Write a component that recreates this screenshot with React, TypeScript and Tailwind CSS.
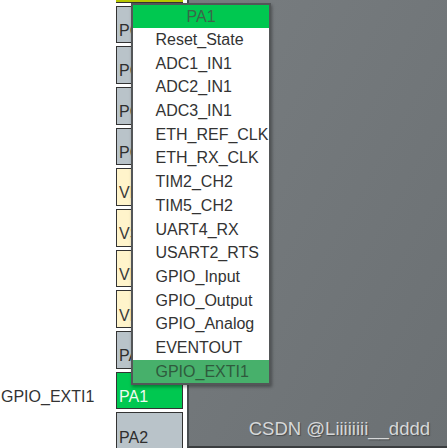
import React from "react";

type Pin = { name: string; kind: "p" | "v" | "sel" };

const pins: Pin[] = [
  { name: "PC0", kind: "p" },
  { name: "PC1", kind: "p" },
  { name: "PC2", kind: "p" },
  { name: "PC3", kind: "p" },
  { name: "VDD", kind: "v" },
  { name: "VSSA", kind: "v" },
  { name: "VREF+", kind: "v" },
  { name: "VDDA", kind: "v" },
  { name: "PA0-WKUP", kind: "p" },
  { name: "PA1", kind: "sel" },
  { name: "PA2", kind: "p" },
];

const options = [
  "Reset_State",
  "ADC1_IN1",
  "ADC2_IN1",
  "ADC3_IN1",
  "ETH_REF_CLK",
  "ETH_RX_CLK",
  "TIM2_CH2",
  "TIM5_CH2",
  "UART4_RX",
  "USART2_RTS",
  "GPIO_Input",
  "GPIO_Output",
  "GPIO_Analog",
  "EVENTOUT",
  "GPIO_EXTI1",
];

function pinClass(kind: Pin["kind"]) {
  if (kind === "v") return "bg-[#fff4cb] text-[#3a3a3a]";
  if (kind === "sel") return "bg-[#00c850] text-[#eefcf0]";
  return "bg-[#b9c3c9] text-[#2e2e2e]";
}

export default function App() {
  return (
    <div className="relative w-[447px] h-[448px] bg-white overflow-hidden flex font-['Liberation_Sans',Arial,sans-serif]">
      {/* pin column with labels */}
      <div className="flex flex-col gap-[3px] w-[183px] shrink-0">
        <div className="flex h-[2.5px] shrink-0">
          <div className="w-[116px]" />
          <div className="w-[67px] bg-[#b6c700] border-b border-[#333]" />
        </div>
        {pins.map((p) => (
          <div key={p.name} className="flex h-[37.7px] shrink-0">
            <div className="w-[116px] flex items-end pl-[1px] pb-[3.5px] text-[16px] leading-[18px] text-[#333] whitespace-nowrap">
              {p.kind === "sel" ? "GPIO_EXTI1" : ""}
            </div>
            <div
              className={
                "w-[67px] border border-[#333] flex items-end pl-[2px] pb-[2.5px] text-[16px] leading-[18px] whitespace-nowrap overflow-hidden " +
                pinClass(p.kind)
              }
            >
              {p.name}
            </div>
          </div>
        ))}
      </div>

      {/* chip body */}
      <div className="ml-[4px] flex-1 h-full border-l-2 border-l-[#474c4f] border-b-2 border-b-[#3b3e40] bg-linear-to-br from-[#787d80] to-[#6b7073]" />

      {/* dropdown menu */}
      <div className="absolute left-[131px] top-[3px] w-[140px] border-2 border-[#535658] bg-white flex flex-col shadow-[1px_2px_3px_rgba(0,0,0,0.35)]">
        <div className="h-[23px] bg-[#00c850] text-center text-[16px] leading-[23px] text-[#3b6648]">
          PA1
        </div>
        {options.map((o, i) => (
          <div
            key={o}
            className={
              "h-[23.7px] pl-[22.5px] text-[16px] leading-[23.7px] whitespace-nowrap overflow-hidden " +
              (i === options.length - 1
                ? "bg-[#47b06b] text-[#2f5a3d]"
                : "text-[#333]")
            }
          >
            {o}
          </div>
        ))}
      </div>

      {/* watermark */}
      <div className="absolute right-[17px] bottom-[10px] text-[18.5px] leading-none text-[#d6d8d9] whitespace-nowrap [text-shadow:1px_1px_1px_rgba(0,0,0,0.35)]">
        CSDN @Liiiiiiii__dddd
      </div>
    </div>
  );
}
